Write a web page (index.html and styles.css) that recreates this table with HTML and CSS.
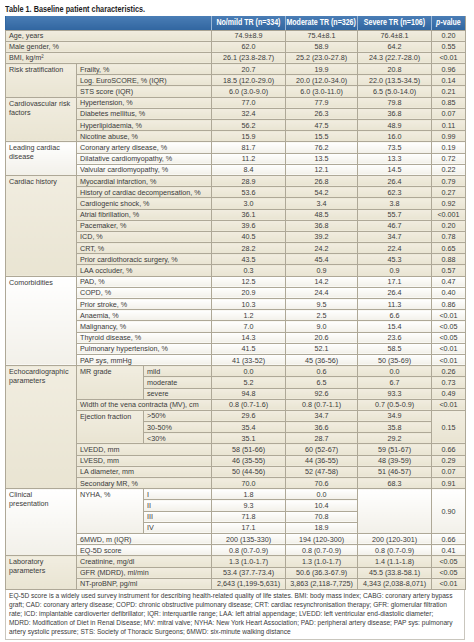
FILE: index.html
```html
<!DOCTYPE html>
<html lang="en">
<head>
<meta charset="utf-8">
<title>Table 1. Baseline patient characteristics</title>
<link rel="stylesheet" href="styles.css">
</head>
<body>
<div class="page">
  <h1 class="title"><span class="narrow">Table 1. Baseline patient characteristics.</span></h1>
  <table class="data">
    <colgroup>
      <col class="w-cat"><col class="w-lab"><col class="w-sub">
      <col class="w-v1"><col class="w-v2"><col class="w-v3"><col class="w-p">
    </colgroup>
    <thead>
      <tr>
        <th colspan="3" class="blank"></th>
        <th><span class="hd">No/mild TR (n=334)</span></th>
        <th><span class="hd">Moderate TR (n=326)</span></th>
        <th><span class="hd">Severe TR (n=106)</span></th>
        <th><span class="hd"><i>p</i>-value</span></th>
      </tr>
    </thead>
    <tbody class="beige">
      <tr><td colspan="3">Age, years</td><td class="num">74.9±8.9</td><td class="num">75.4±8.1</td><td class="num">76.4±8.1</td><td class="num">0.20</td></tr>
      <tr><td colspan="3">Male gender, %</td><td class="num">62.0</td><td class="num">58.9</td><td class="num">64.2</td><td class="num">0.55</td></tr>
      <tr><td colspan="3">BMI, kg/m²</td><td class="num">26.1 (23.8-28.7)</td><td class="num">25.2 (23.0-27.8)</td><td class="num">24.3 (22.7-28.0)</td><td class="num">&lt;0.01</td></tr>
    </tbody>
    <tbody class="beige">
      <tr><td rowspan="3" class="cat">Risk stratification</td><td colspan="2">Frailty, %</td><td class="num">20.7</td><td class="num">19.9</td><td class="num">20.8</td><td class="num">0.96</td></tr>
      <tr><td colspan="2">Log. EuroSCORE, % (IQR)</td><td class="num">18.5 (12.0-29.0)</td><td class="num">20.0 (12.0-34.0)</td><td class="num">22.0 (13.5-34.5)</td><td class="num">0.14</td></tr>
      <tr><td colspan="2">STS score (IQR)</td><td class="num">6.0 (3.0-9.0)</td><td class="num">6.0 (3.0-11.0)</td><td class="num">6.5 (5.0-14.0)</td><td class="num">0.21</td></tr>
    </tbody>
    <tbody class="beige">
      <tr><td rowspan="4" class="cat">Cardiovascular risk factors</td><td colspan="2">Hypertension, %</td><td class="num">77.0</td><td class="num">77.9</td><td class="num">79.8</td><td class="num">0.85</td></tr>
      <tr><td colspan="2">Diabetes mellitus, %</td><td class="num">32.4</td><td class="num">26.3</td><td class="num">36.8</td><td class="num">0.07</td></tr>
      <tr><td colspan="2">Hyperlipidaemia, %</td><td class="num">56.2</td><td class="num">47.5</td><td class="num">48.9</td><td class="num">0.11</td></tr>
      <tr><td colspan="2">Nicotine abuse, %</td><td class="num">15.9</td><td class="num">15.5</td><td class="num">16.0</td><td class="num">0.99</td></tr>
    </tbody>
    <tbody class="white">
      <tr><td rowspan="3" class="cat">Leading cardiac disease</td><td colspan="2">Coronary artery disease, %</td><td class="num">81.7</td><td class="num">76.2</td><td class="num">73.5</td><td class="num">0.19</td></tr>
      <tr><td colspan="2">Dilatative cardiomyopathy, %</td><td class="num">11.2</td><td class="num">13.5</td><td class="num">13.3</td><td class="num">0.72</td></tr>
      <tr><td colspan="2">Valvular cardiomyopathy, %</td><td class="num">8.4</td><td class="num">12.1</td><td class="num">14.5</td><td class="num">0.22</td></tr>
    </tbody>
    <tbody class="beige">
      <tr><td rowspan="9" class="cat">Cardiac history</td><td colspan="2">Myocardial infarction, %</td><td class="num">28.9</td><td class="num">26.8</td><td class="num">26.4</td><td class="num">0.79</td></tr>
      <tr><td colspan="2">History of cardiac decompensation, %</td><td class="num">53.6</td><td class="num">54.2</td><td class="num">62.3</td><td class="num">0.27</td></tr>
      <tr><td colspan="2">Cardiogenic shock, %</td><td class="num">3.0</td><td class="num">3.4</td><td class="num">3.8</td><td class="num">0.92</td></tr>
      <tr><td colspan="2">Atrial fibrillation, %</td><td class="num">36.1</td><td class="num">48.5</td><td class="num">55.7</td><td class="num">&lt;0.001</td></tr>
      <tr><td colspan="2">Pacemaker, %</td><td class="num">39.6</td><td class="num">36.8</td><td class="num">46.7</td><td class="num">0.20</td></tr>
      <tr><td colspan="2">ICD, %</td><td class="num">40.5</td><td class="num">39.2</td><td class="num">34.7</td><td class="num">0.78</td></tr>
      <tr><td colspan="2">CRT, %</td><td class="num">28.2</td><td class="num">24.2</td><td class="num">22.4</td><td class="num">0.65</td></tr>
      <tr><td colspan="2">Prior cardiothoracic surgery, %</td><td class="num">43.5</td><td class="num">45.4</td><td class="num">45.3</td><td class="num">0.88</td></tr>
      <tr><td colspan="2">LAA occluder, %</td><td class="num">0.3</td><td class="num">0.9</td><td class="num">0.9</td><td class="num">0.57</td></tr>
    </tbody>
    <tbody class="white">
      <tr><td rowspan="8" class="cat">Comorbidities</td><td colspan="2">PAD, %</td><td class="num">12.5</td><td class="num">14.2</td><td class="num">17.1</td><td class="num">0.47</td></tr>
      <tr><td colspan="2">COPD, %</td><td class="num">20.9</td><td class="num">24.4</td><td class="num">26.4</td><td class="num">0.40</td></tr>
      <tr><td colspan="2">Prior stroke, %</td><td class="num">10.3</td><td class="num">9.5</td><td class="num">11.3</td><td class="num">0.86</td></tr>
      <tr><td colspan="2">Anaemia, %</td><td class="num">1.2</td><td class="num">2.5</td><td class="num">6.6</td><td class="num">&lt;0.01</td></tr>
      <tr><td colspan="2">Malignancy, %</td><td class="num">7.0</td><td class="num">9.0</td><td class="num">15.4</td><td class="num">&lt;0.05</td></tr>
      <tr><td colspan="2">Thyroid disease, %</td><td class="num">14.3</td><td class="num">20.6</td><td class="num">23.6</td><td class="num">&lt;0.05</td></tr>
      <tr><td colspan="2">Pulmonary hypertension, %</td><td class="num">41.5</td><td class="num">52.1</td><td class="num">58.5</td><td class="num">&lt;0.01</td></tr>
      <tr><td colspan="2">PAP sys, mmHg</td><td class="num">41 (33-52)</td><td class="num">45 (36-56)</td><td class="num">50 (35-69)</td><td class="num">&lt;0.01</td></tr>
    </tbody>
    <tbody class="beige">
      <tr><td rowspan="11" class="cat">Echocardiographic parameters</td><td rowspan="3" class="cat">MR grade</td><td>mild</td><td class="num">0.0</td><td class="num">0.6</td><td class="num">0.0</td><td class="num">0.26</td></tr>
      <tr><td>moderate</td><td class="num">5.2</td><td class="num">6.5</td><td class="num">6.7</td><td class="num">0.73</td></tr>
      <tr><td>severe</td><td class="num">94.8</td><td class="num">92.6</td><td class="num">93.3</td><td class="num">0.49</td></tr>
      <tr><td colspan="2">Width of the vena contracta (MV), cm</td><td class="num">0.8 (0.7-1.6)</td><td class="num">0.8 (0.7-1.1)</td><td class="num">0.7 (0.5-0.9)</td><td class="num">&lt;0.01</td></tr>
      <tr><td rowspan="3" class="cat">Ejection fraction</td><td>&gt;50%</td><td class="num">29.6</td><td class="num">34.7</td><td class="num">34.9</td><td rowspan="3" class="num">0.15</td></tr>
      <tr><td>30-50%</td><td class="num">35.4</td><td class="num">36.6</td><td class="num">35.8</td></tr>
      <tr><td>&lt;30%</td><td class="num">35.1</td><td class="num">28.7</td><td class="num">29.2</td></tr>
      <tr><td colspan="2">LVEDD, mm</td><td class="num">58 (51-66)</td><td class="num">60 (52-67)</td><td class="num">59 (51-67)</td><td class="num">0.66</td></tr>
      <tr><td colspan="2">LVESD, mm</td><td class="num">46 (35-55)</td><td class="num">44 (36-55)</td><td class="num">48 (39-59)</td><td class="num">0.29</td></tr>
      <tr><td colspan="2">LA diameter, mm</td><td class="num">50 (44-56)</td><td class="num">52 (47-58)</td><td class="num">51 (46-57)</td><td class="num">0.07</td></tr>
      <tr><td colspan="2">Secondary MR, %</td><td class="num">70.0</td><td class="num">70.6</td><td class="num">68.3</td><td class="num">0.91</td></tr>
    </tbody>
    <tbody class="white">
      <tr><td rowspan="6" class="cat">Clinical presentation</td><td rowspan="4" class="cat">NYHA, %</td><td>I</td><td class="num">1.8</td><td class="num">0.0</td><td rowspan="4"></td><td rowspan="4" class="num">0.90</td></tr>
      <tr><td>II</td><td class="num">9.3</td><td class="num">10.4</td></tr>
      <tr><td>III</td><td class="num">71.8</td><td class="num">70.8</td></tr>
      <tr><td>IV</td><td class="num">17.1</td><td class="num">18.9</td></tr>
      <tr><td colspan="2">6MWD, m (IQR)</td><td class="num">200 (135-330)</td><td class="num">194 (120-300)</td><td class="num">200 (120-301)</td><td class="num">0.66</td></tr>
      <tr><td colspan="2">EQ-5D score</td><td class="num">0.8 (0.7-0.9)</td><td class="num">0.8 (0.7-0.9)</td><td class="num">0.8 (0.7-0.9)</td><td class="num">0.41</td></tr>
    </tbody>
    <tbody class="beige">
      <tr><td rowspan="3" class="cat">Laboratory parameters</td><td colspan="2">Creatinine, mg/dl</td><td class="num">1.3 (1.0-1.7)</td><td class="num">1.3 (1.0-1.7)</td><td class="num">1.4 (1.1-1.8)</td><td class="num">&lt;0.05</td></tr>
      <tr><td colspan="2">GFR (MDRD), ml/min</td><td class="num">53.4 (37.7-73.4)</td><td class="num">50.6 (36.3-67.9)</td><td class="num">45.5 (33.8-58.1)</td><td class="num">&lt;0.05</td></tr>
      <tr><td colspan="2">NT-proBNP, pg/ml</td><td class="num">2,643 (1,199-5,631)</td><td class="num">3,863 (2,118-7,725)</td><td class="num">4,343 (2,038-8,071)</td><td class="num">&lt;0.01</td></tr>
    </tbody>
  </table>
  <p class="note">EQ-5D score is a widely used survey instrument for describing health-related quality of life states. BMI: body mass index; CABG: coronary artery bypass<br>graft; CAD: coronary artery disease; COPD: chronic obstructive pulmonary disease; CRT: cardiac resynchronisation therapy; GFR: glomerular filtration<br>rate; ICD: implantable cardioverter defibrillator; IQR: interquartile range; LAA: left atrial appendage; LVEDD: left ventricular end-diastolic diameter;<br>MDRD: Modification of Diet in Renal Disease; MV: mitral valve; NYHA: New York Heart Association; PAD: peripheral artery disease; PAP sys: pulmonary<br>artery systolic pressure; STS: Society of Thoracic Surgeons; 6MWD: six-minute walking distance</p>
</div>
</body>
</html>
```
FILE: styles.css
```css
html, body {
  margin: 0;
  padding: 0;
  background: #ffffff;
}

body {
  font-family: "Liberation Sans", Arial, sans-serif;
  color: #3a3a3a;
}

.page {
  padding-left: 5px;
  width: 460px;
}

.title {
  margin: 0;
  height: 16px;
  line-height: 17px;
  font-family: "Liberation Sans", Arial, sans-serif;
  font-weight: bold;
  font-size: 9.6px;
  color: #1e1e1e;
  white-space: nowrap;
}

.narrow {
  display: inline-block;
  transform: scaleX(0.76);
  transform-origin: left center;
}

.data {
  width: 460px;
  table-layout: fixed;
  border-collapse: collapse;
  font-size: 7.2px;
}

.w-cat { width: 71px; }
.w-lab { width: 67px; }
.w-sub { width: 68px; }
.w-v1 { width: 74px; }
.w-v2 { width: 72px; }
.w-v3 { width: 74px; }
.w-p { width: 34px; }

.data thead tr {
  height: 14px;
}

.data th {
  padding: 0;
  background: linear-gradient(#4a7db5, #3166a0);
  color: #ffffff;
  font-family: "Liberation Sans", Arial, sans-serif;
  font-weight: bold;
  font-size: 8.2px;
  line-height: 10px;
  text-align: center;
  white-space: nowrap;
  overflow: hidden;
  border-top: 0;
  border-bottom: 1px solid #a9a393;
  border-left: 1px solid #9bb7d6;
  border-right: 1px solid #9bb7d6;
}

.hd {
  display: block;
  width: 130%;
  margin-left: -15%;
  transform: scaleX(0.86);
}

.data th.blank {
  border-left: 1px solid #3166a0;
}

.data th:last-child {
  border-right: 1px solid #a9a393;
}

.data tbody tr {
  height: 11.2px;
}

.data td {
  padding: 0 3px;
  line-height: 9px;
  border: 1px solid #aea897;
  white-space: nowrap;
  vertical-align: middle;
}

.data td.cat {
  white-space: normal;
  vertical-align: top;
  padding-top: 1px;
}

.data td.num {
  text-align: center;
  padding: 0 1px;
}

.beige td {
  background: linear-gradient(#f1ede0, #e9e4d2);
}

.white td {
  background: linear-gradient(#ffffff, #f2f0e9);
}

.note {
  margin: 0;
  padding: 1px 3px 3px;
  border: 1px solid #c9c6bd;
  border-top: 0;
  font-size: 6.6px;
  line-height: 9px;
  white-space: nowrap;
  overflow: hidden;
  color: #3a3a3a;
}
```
